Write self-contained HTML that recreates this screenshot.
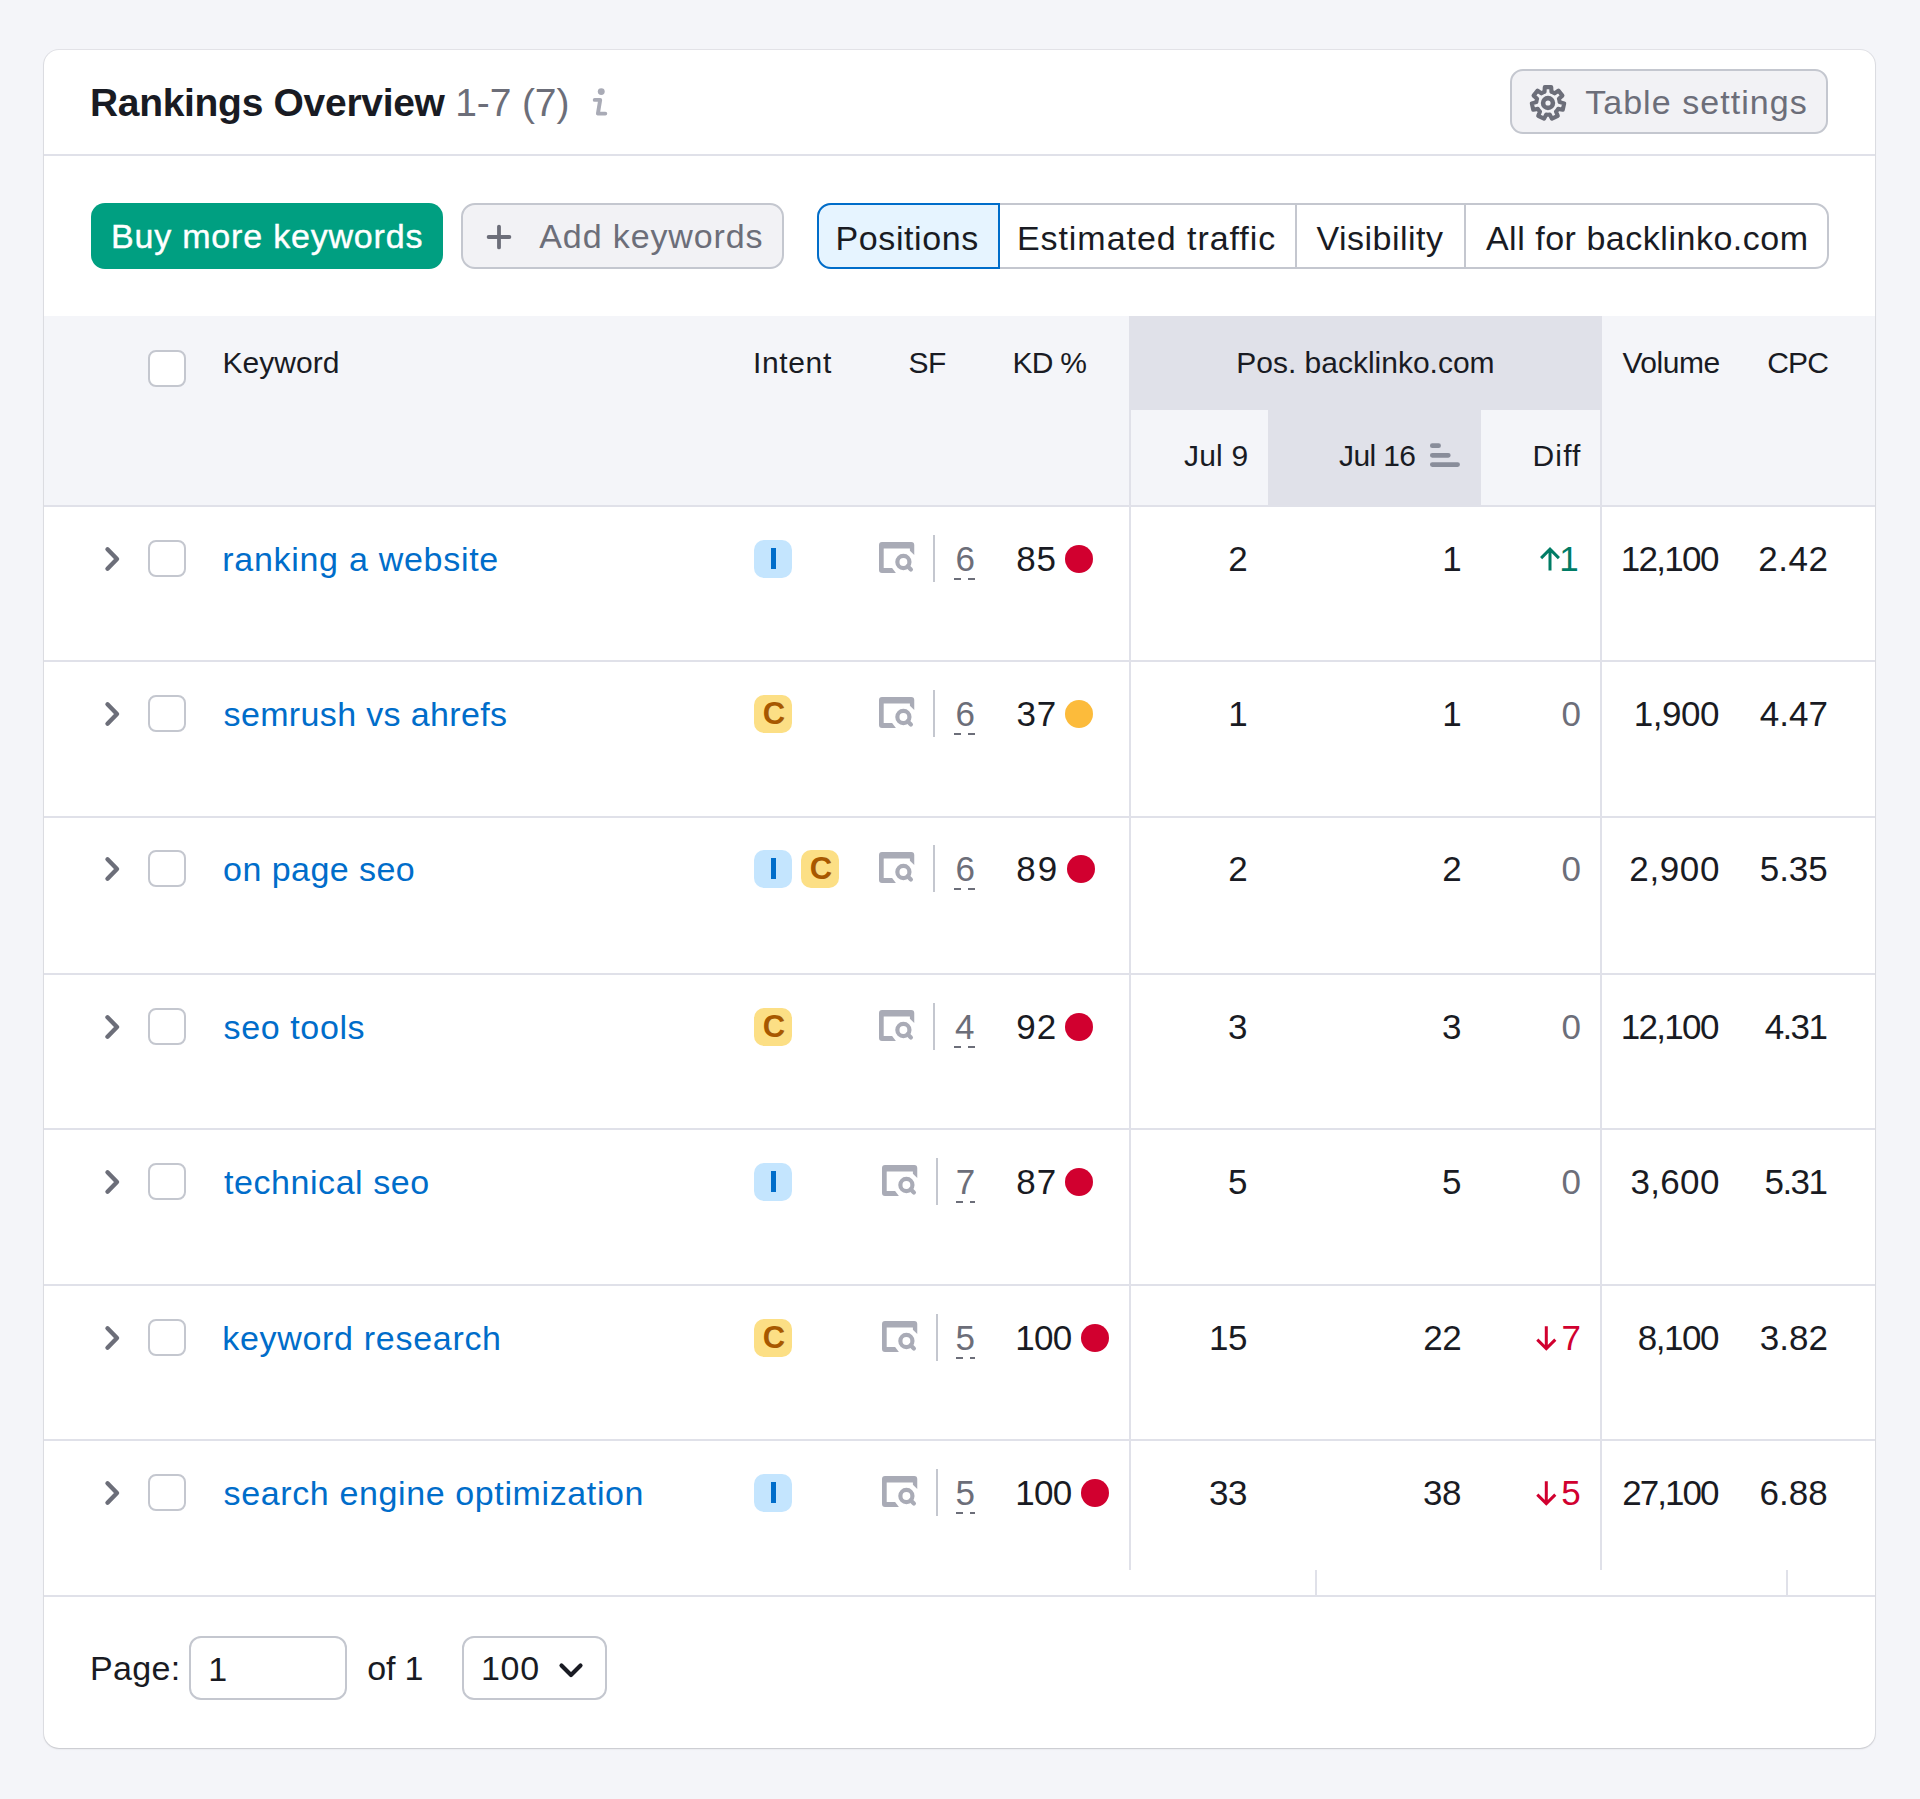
<!DOCTYPE html>
<html><head><meta charset="utf-8"><title>Rankings Overview</title>
<style>
html,body{margin:0;padding:0;}
body{width:1920px;height:1799px;background:#f4f5f9;position:relative;overflow:hidden;font-family:"Liberation Sans",sans-serif;color:#191b23;}
.t{position:absolute;white-space:nowrap;}
.b{position:absolute;}
</style></head><body>
<div class="b" style="left:44px;top:50px;width:1831px;height:1697.5px;background:#fff;border-radius:15px;box-shadow:0 0 0 1px rgba(25,27,35,0.08),0 1px 2px rgba(25,27,35,0.14);"></div>
<div class="t" style="left:89.90px;top:83px;font-size:39px;line-height:39px;font-weight:bold;letter-spacing:-0.30px;">Rankings Overview</div>
<div class="t" style="left:455.25px;top:83px;font-size:39px;line-height:39px;letter-spacing:-0.12px;color:#6c6e79;">1-7 (7)</div>
<svg class="b" style="left:590px;top:86px" width="20" height="32" viewBox="0 0 20 32"><circle cx="11.25" cy="5.6" r="3.45" fill="#a9abb6"/><path d="M4.7 13.9 H10.2 L7.9 27.6 H15.3" fill="none" stroke="#a9abb6" stroke-width="3.9" stroke-linecap="round" stroke-linejoin="round"/></svg>
<div class="b" style="left:1510px;top:69px;width:318px;height:65px;box-sizing:border-box;border:2px solid #c4c7cf;border-radius:13px;background:#f2f2f5;"></div>
<svg class="b" style="left:1527.5px;top:82.5px" width="40" height="40" viewBox="0 0 40 40"><path d="M14.92 9.46 L16.54 8.82 L16.78 4.12 L23.22 4.12 L23.46 8.82 L25.08 9.46 L26.58 10.33 L30.41 7.58 L34.42 12.62 L30.89 15.73 L31.41 17.40 L31.67 19.12 L36.20 20.40 L34.76 26.67 L30.13 25.86 L29.15 27.29 L27.96 28.57 L29.79 32.91 L23.99 35.70 L21.73 31.57 L20.00 31.70 L18.27 31.57 L16.01 35.70 L10.21 32.91 L12.04 28.57 L10.85 27.29 L9.87 25.86 L5.24 26.67 L3.80 20.40 L8.33 19.12 L8.59 17.40 L9.11 15.73 L5.58 12.62 L9.59 7.58 L13.42 10.33 Z" fill="none" stroke="#6c6e79" stroke-width="4.1" stroke-linejoin="round"/><circle cx="20" cy="20" r="4.9" fill="none" stroke="#6c6e79" stroke-width="4.6"/></svg>
<div class="t" style="left:1585.15px;top:85px;font-size:34px;line-height:34px;letter-spacing:1.05px;color:#6c6e79;">Table settings</div>
<div class="b" style="left:44px;top:154px;width:1831px;height:2px;background:#e0e1e9;"></div>
<div class="b" style="left:91px;top:203px;width:352px;height:66px;background:#009f81;border-radius:14px;"></div>
<div class="t" style="left:110.95px;top:219px;font-size:34px;line-height:34px;letter-spacing:0.81px;color:#fff;-webkit-text-stroke:0.4px #fff;">Buy more keywords</div>
<div class="b" style="left:461px;top:203px;width:323px;height:66px;box-sizing:border-box;border:2px solid #c4c7cf;border-radius:14px;background:#f2f2f5;"></div>
<svg class="b" style="left:485px;top:223px" width="28" height="28" viewBox="0 0 28 28"><path d="M14 3.6 V24.4 M3.6 14 H24.4" stroke="#6c6e79" stroke-width="3.8" stroke-linecap="round"/></svg>
<div class="t" style="left:539.30px;top:219px;font-size:34px;line-height:34px;letter-spacing:0.88px;color:#6c6e79;">Add keywords</div>
<div class="b" style="left:817px;top:203px;width:1012px;height:66px;box-sizing:border-box;border:2px solid #c4c7cf;border-radius:14px;background:#fff;"></div>
<div class="b" style="left:817px;top:203px;width:183px;height:66px;box-sizing:border-box;border:2px solid #006dca;border-radius:14px 0 0 14px;background:#e6f4ff;"></div>
<div class="b" style="left:1295px;top:205px;width:2px;height:62px;background:#c4c7cf;"></div>
<div class="b" style="left:1464px;top:205px;width:2px;height:62px;background:#c4c7cf;"></div>
<div class="t" style="left:835.60px;top:221px;font-size:34px;line-height:34px;letter-spacing:0.58px;">Positions</div>
<div class="t" style="left:1016.90px;top:221px;font-size:34px;line-height:34px;letter-spacing:0.95px;">Estimated traffic</div>
<div class="t" style="left:1316.45px;top:221px;font-size:34px;line-height:34px;letter-spacing:0.49px;">Visibility</div>
<div class="t" style="left:1485.90px;top:221px;font-size:34px;line-height:34px;letter-spacing:0.52px;">All for backlinko.com</div>
<div class="b" style="left:44px;top:316px;width:1831px;height:189px;background:#f4f5f9;"></div>
<div class="b" style="left:1129px;top:316px;width:471px;height:94px;background:#e0e1e9;"></div>
<div class="b" style="left:1267.5px;top:410px;width:213.5px;height:95px;background:#e0e1e9;"></div>
<div class="b" style="left:1129px;top:316px;width:2px;height:1254px;background:#e0e1e9;"></div>
<div class="b" style="left:1600px;top:316px;width:2px;height:1254px;background:#e0e1e9;"></div>
<div class="b" style="left:44px;top:505px;width:1831px;height:2px;background:#e0e1e9;"></div>
<div class="b" style="left:148px;top:349.5px;width:37.5px;height:37.0px;box-sizing:border-box;border:2px solid #c4c7cf;border-radius:8px;background:#fff;"></div>
<div class="t" style="left:222.55px;top:348px;font-size:30px;line-height:30px;letter-spacing:0.03px;">Keyword</div>
<div class="t" style="left:752.95px;top:348px;font-size:30px;line-height:30px;letter-spacing:0.65px;">Intent</div>
<div class="t" style="left:908.52px;top:348px;font-size:30px;line-height:30px;letter-spacing:-0.60px;">SF</div>
<div class="t" style="left:1012.58px;top:348px;font-size:30px;line-height:30px;letter-spacing:-0.80px;">KD %</div>
<div class="t" style="left:1236.30px;top:348px;font-size:30px;line-height:30px;letter-spacing:-0.01px;">Pos. backlinko.com</div>
<div class="t" style="left:1622.45px;top:348px;font-size:30px;line-height:30px;letter-spacing:-0.46px;">Volume</div>
<div class="t" style="left:1767.15px;top:348px;font-size:30px;line-height:30px;letter-spacing:-0.80px;">CPC</div>
<div class="t" style="left:1184.05px;top:441px;font-size:30px;line-height:30px;letter-spacing:0.19px;">Jul 9</div>
<div class="t" style="left:1339.05px;top:441px;font-size:30px;line-height:30px;letter-spacing:-0.65px;">Jul 16</div>
<div class="t" style="left:1532.55px;top:441px;font-size:30px;line-height:30px;letter-spacing:1.15px;">Diff</div>
<svg class="b" style="left:1426px;top:440px" width="36" height="30" viewBox="0 -0.0 36 30"><path d="M6.3 5.7 H12.6 M6.3 15.3 H22.3 M6.3 24.6 H31.6" stroke="#898d9a" stroke-width="4.7" stroke-linecap="round"/></svg>
<div class="b" style="left:44px;top:660px;width:1831px;height:2px;background:#e0e1e9;"></div>
<svg class="b" style="left:100px;top:543.8px" width="24" height="30" viewBox="0 0 24 30"><path d="M7.5 4 L17 13.7 L7.5 23.4" transform="translate(0,1.3)" fill="none" stroke="#6c6e79" stroke-width="4.4" stroke-linecap="round" stroke-linejoin="round"/></svg>
<div class="b" style="left:148px;top:540px;width:37.5px;height:37px;box-sizing:border-box;border:2px solid #c4c7cf;border-radius:8px;background:#fff;"></div>
<div class="t" style="left:222.25px;top:542px;font-size:34px;line-height:34px;letter-spacing:0.71px;color:#006dca;">ranking a website</div>
<div class="b" style="left:754px;top:540px;width:37.5px;height:37.5px;background:#c4e5fe;border-radius:10px;"></div>
<div class="b" style="left:771px;top:548px;width:4.7999999999999545px;height:21px;background:#006dca;"></div>
<svg class="b" style="left:879px;top:542.4499999999999px" width="36" height="32" viewBox="0 0 36 32"><path d="M0 3 Q0 0 3 0 H32.25 Q35.25 0 35.25 3 V13.1 L30.9 8.75 V6.5 H4.7 V25.9 H13.1 L16.9 30.9 H3 Q0 30.9 0 27.9 Z" fill="#a9abb6"/>
<circle cx="24.4" cy="20" r="6.05" fill="none" stroke="#a9abb6" stroke-width="4.2"/><path d="M28.6 24.2 L31.9 27.5" stroke="#a9abb6" stroke-width="4.2" stroke-linecap="round"/></svg>
<div class="b" style="left:933px;top:535px;width:2px;height:46.5px;background:#c4c7cf;"></div>
<div class="t" style="left:955.45px;top:541px;font-size:35px;line-height:35px;color:#6c6e79;">6</div>
<div class="b" style="left:954.0px;top:578px;width:21.3px;height:2px;background:repeating-linear-gradient(90deg,#6c6e79 0 7px,transparent 7px 14px);"></div>
<div class="t" style="left:1016.30px;top:541px;font-size:35px;line-height:35px;letter-spacing:0.65px;">85</div>
<div class="b" style="left:1065px;top:545px;width:28.40000000000009px;height:28.399999999999977px;background:#d1002f;border-radius:50%;"></div>
<div class="t" style="left:1228.30px;top:541px;font-size:35px;line-height:35px;letter-spacing:-0.50px;">2</div>
<div class="t" style="left:1442.25px;top:541px;font-size:35px;line-height:35px;letter-spacing:-0.50px;">1</div>
<div class="t" style="left:1559.25px;top:541px;font-size:35px;line-height:35px;color:#007c65;">1</div>
<svg class="b" style="left:1536px;top:542.8px" width="28" height="30" viewBox="0 0 28 30"><path d="M14 27.6 V6.5 M5.1 15.1 L14 6.2 L22.9 15.1" fill="none" stroke="#007c65" stroke-width="3" stroke-linecap="butt" stroke-linejoin="miter"/></svg>
<div class="t" style="left:1620.85px;top:541px;font-size:35px;line-height:35px;letter-spacing:-1.71px;">12,100</div>
<div class="t" style="left:1758.35px;top:541px;font-size:35px;line-height:35px;letter-spacing:0.50px;">2.42</div>
<div class="b" style="left:44px;top:816px;width:1831px;height:2px;background:#e0e1e9;"></div>
<svg class="b" style="left:100px;top:698.8px" width="24" height="30" viewBox="0 0 24 30"><path d="M7.5 4 L17 13.7 L7.5 23.4" transform="translate(0,1.3)" fill="none" stroke="#6c6e79" stroke-width="4.4" stroke-linecap="round" stroke-linejoin="round"/></svg>
<div class="b" style="left:148px;top:695px;width:37.5px;height:37px;box-sizing:border-box;border:2px solid #c4c7cf;border-radius:8px;background:#fff;"></div>
<div class="t" style="left:223.55px;top:697px;font-size:34px;line-height:34px;letter-spacing:0.36px;color:#006dca;">semrush vs ahrefs</div>
<div class="b" style="left:754px;top:695px;width:37.5px;height:37.5px;background:#fcdf85;border-radius:10px;"></div>
<div class="t" style="left:762.75px;top:698px;font-size:31px;line-height:31px;font-weight:bold;color:#a75800;">C</div>
<svg class="b" style="left:879px;top:697.4499999999999px" width="36" height="32" viewBox="0 0 36 32"><path d="M0 3 Q0 0 3 0 H32.25 Q35.25 0 35.25 3 V13.1 L30.9 8.75 V6.5 H4.7 V25.9 H13.1 L16.9 30.9 H3 Q0 30.9 0 27.9 Z" fill="#a9abb6"/>
<circle cx="24.4" cy="20" r="6.05" fill="none" stroke="#a9abb6" stroke-width="4.2"/><path d="M28.6 24.2 L31.9 27.5" stroke="#a9abb6" stroke-width="4.2" stroke-linecap="round"/></svg>
<div class="b" style="left:933px;top:690px;width:2px;height:46.5px;background:#c4c7cf;"></div>
<div class="t" style="left:955.45px;top:696px;font-size:35px;line-height:35px;color:#6c6e79;">6</div>
<div class="b" style="left:954.0px;top:733px;width:21.3px;height:2px;background:repeating-linear-gradient(90deg,#6c6e79 0 7px,transparent 7px 14px);"></div>
<div class="t" style="left:1016.45px;top:696px;font-size:35px;line-height:35px;letter-spacing:0.80px;">37</div>
<div class="b" style="left:1065px;top:700px;width:28.40000000000009px;height:28.399999999999977px;background:#fcbb3b;border-radius:50%;"></div>
<div class="t" style="left:1228.25px;top:696px;font-size:35px;line-height:35px;letter-spacing:-0.50px;">1</div>
<div class="t" style="left:1442.25px;top:696px;font-size:35px;line-height:35px;letter-spacing:-0.50px;">1</div>
<div class="t" style="left:1561.50px;top:696px;font-size:35px;line-height:35px;color:#6c6e79;">0</div>
<div class="t" style="left:1633.85px;top:696px;font-size:35px;line-height:35px;letter-spacing:-0.51px;">1,900</div>
<div class="t" style="left:1759.75px;top:696px;font-size:35px;line-height:35px;letter-spacing:0.03px;">4.47</div>
<div class="b" style="left:44px;top:973px;width:1831px;height:2px;background:#e0e1e9;"></div>
<svg class="b" style="left:100px;top:853.8px" width="24" height="30" viewBox="0 0 24 30"><path d="M7.5 4 L17 13.7 L7.5 23.4" transform="translate(0,1.3)" fill="none" stroke="#6c6e79" stroke-width="4.4" stroke-linecap="round" stroke-linejoin="round"/></svg>
<div class="b" style="left:148px;top:850px;width:37.5px;height:37px;box-sizing:border-box;border:2px solid #c4c7cf;border-radius:8px;background:#fff;"></div>
<div class="t" style="left:223.05px;top:852px;font-size:34px;line-height:34px;letter-spacing:0.45px;color:#006dca;">on page seo</div>
<div class="b" style="left:754px;top:850px;width:37.5px;height:37.5px;background:#c4e5fe;border-radius:10px;"></div>
<div class="b" style="left:771px;top:858px;width:4.7999999999999545px;height:21px;background:#006dca;"></div>
<div class="b" style="left:801px;top:850px;width:37.5px;height:37.5px;background:#fcdf85;border-radius:10px;"></div>
<div class="t" style="left:809.75px;top:853px;font-size:31px;line-height:31px;font-weight:bold;color:#a75800;">C</div>
<svg class="b" style="left:879px;top:852.4499999999999px" width="36" height="32" viewBox="0 0 36 32"><path d="M0 3 Q0 0 3 0 H32.25 Q35.25 0 35.25 3 V13.1 L30.9 8.75 V6.5 H4.7 V25.9 H13.1 L16.9 30.9 H3 Q0 30.9 0 27.9 Z" fill="#a9abb6"/>
<circle cx="24.4" cy="20" r="6.05" fill="none" stroke="#a9abb6" stroke-width="4.2"/><path d="M28.6 24.2 L31.9 27.5" stroke="#a9abb6" stroke-width="4.2" stroke-linecap="round"/></svg>
<div class="b" style="left:933px;top:845px;width:2px;height:46.5px;background:#c4c7cf;"></div>
<div class="t" style="left:955.45px;top:851px;font-size:35px;line-height:35px;color:#6c6e79;">6</div>
<div class="b" style="left:954.0px;top:888px;width:21.3px;height:2px;background:repeating-linear-gradient(90deg,#6c6e79 0 7px,transparent 7px 14px);"></div>
<div class="t" style="left:1016.30px;top:851px;font-size:35px;line-height:35px;letter-spacing:2.00px;">89</div>
<div class="b" style="left:1067px;top:855px;width:28.40000000000009px;height:28.399999999999977px;background:#d1002f;border-radius:50%;"></div>
<div class="t" style="left:1228.30px;top:851px;font-size:35px;line-height:35px;letter-spacing:-0.50px;">2</div>
<div class="t" style="left:1442.30px;top:851px;font-size:35px;line-height:35px;letter-spacing:-0.50px;">2</div>
<div class="t" style="left:1561.50px;top:851px;font-size:35px;line-height:35px;color:#6c6e79;">0</div>
<div class="t" style="left:1629.35px;top:851px;font-size:35px;line-height:35px;letter-spacing:0.61px;">2,900</div>
<div class="t" style="left:1759.80px;top:851px;font-size:35px;line-height:35px;letter-spacing:-0.08px;">5.35</div>
<div class="b" style="left:44px;top:1128px;width:1831px;height:2px;background:#e0e1e9;"></div>
<svg class="b" style="left:100px;top:1011.8px" width="24" height="30" viewBox="0 0 24 30"><path d="M7.5 4 L17 13.7 L7.5 23.4" transform="translate(0,1.3)" fill="none" stroke="#6c6e79" stroke-width="4.4" stroke-linecap="round" stroke-linejoin="round"/></svg>
<div class="b" style="left:148px;top:1008px;width:37.5px;height:37px;box-sizing:border-box;border:2px solid #c4c7cf;border-radius:8px;background:#fff;"></div>
<div class="t" style="left:223.55px;top:1010px;font-size:34px;line-height:34px;letter-spacing:0.62px;color:#006dca;">seo tools</div>
<div class="b" style="left:754px;top:1008px;width:37.5px;height:37.5px;background:#fcdf85;border-radius:10px;"></div>
<div class="t" style="left:762.75px;top:1011px;font-size:31px;line-height:31px;font-weight:bold;color:#a75800;">C</div>
<svg class="b" style="left:879px;top:1010.4499999999999px" width="36" height="32" viewBox="0 0 36 32"><path d="M0 3 Q0 0 3 0 H32.25 Q35.25 0 35.25 3 V13.1 L30.9 8.75 V6.5 H4.7 V25.9 H13.1 L16.9 30.9 H3 Q0 30.9 0 27.9 Z" fill="#a9abb6"/>
<circle cx="24.4" cy="20" r="6.05" fill="none" stroke="#a9abb6" stroke-width="4.2"/><path d="M28.6 24.2 L31.9 27.5" stroke="#a9abb6" stroke-width="4.2" stroke-linecap="round"/></svg>
<div class="b" style="left:933px;top:1003px;width:2px;height:46.5px;background:#c4c7cf;"></div>
<div class="t" style="left:954.95px;top:1009px;font-size:35px;line-height:35px;color:#6c6e79;">4</div>
<div class="b" style="left:954.0px;top:1046px;width:21.3px;height:2px;background:repeating-linear-gradient(90deg,#6c6e79 0 7px,transparent 7px 14px);"></div>
<div class="t" style="left:1016.15px;top:1009px;font-size:35px;line-height:35px;letter-spacing:1.10px;">92</div>
<div class="b" style="left:1065px;top:1013px;width:28.40000000000009px;height:28.40000000000009px;background:#d1002f;border-radius:50%;"></div>
<div class="t" style="left:1228.05px;top:1009px;font-size:35px;line-height:35px;letter-spacing:-0.50px;">3</div>
<div class="t" style="left:1442.05px;top:1009px;font-size:35px;line-height:35px;letter-spacing:-0.50px;">3</div>
<div class="t" style="left:1561.50px;top:1009px;font-size:35px;line-height:35px;color:#6c6e79;">0</div>
<div class="t" style="left:1620.85px;top:1009px;font-size:35px;line-height:35px;letter-spacing:-1.71px;">12,100</div>
<div class="t" style="left:1764.70px;top:1009px;font-size:35px;line-height:35px;letter-spacing:-1.63px;">4.31</div>
<div class="b" style="left:44px;top:1284px;width:1831px;height:2px;background:#e0e1e9;"></div>
<svg class="b" style="left:100px;top:1166.8px" width="24" height="30" viewBox="0 0 24 30"><path d="M7.5 4 L17 13.7 L7.5 23.4" transform="translate(0,1.3)" fill="none" stroke="#6c6e79" stroke-width="4.4" stroke-linecap="round" stroke-linejoin="round"/></svg>
<div class="b" style="left:148px;top:1163px;width:37.5px;height:37px;box-sizing:border-box;border:2px solid #c4c7cf;border-radius:8px;background:#fff;"></div>
<div class="t" style="left:224.00px;top:1165px;font-size:34px;line-height:34px;letter-spacing:0.56px;color:#006dca;">technical seo</div>
<div class="b" style="left:754px;top:1163px;width:37.5px;height:37.5px;background:#c4e5fe;border-radius:10px;"></div>
<div class="b" style="left:771px;top:1171px;width:4.7999999999999545px;height:21px;background:#006dca;"></div>
<svg class="b" style="left:881.5px;top:1165.45px" width="36" height="32" viewBox="0 0 36 32"><path d="M0 3 Q0 0 3 0 H32.25 Q35.25 0 35.25 3 V13.1 L30.9 8.75 V6.5 H4.7 V25.9 H13.1 L16.9 30.9 H3 Q0 30.9 0 27.9 Z" fill="#a9abb6"/>
<circle cx="24.4" cy="20" r="6.05" fill="none" stroke="#a9abb6" stroke-width="4.2"/><path d="M28.6 24.2 L31.9 27.5" stroke="#a9abb6" stroke-width="4.2" stroke-linecap="round"/></svg>
<div class="b" style="left:935.5px;top:1158px;width:2.0px;height:46.5px;background:#c4c7cf;"></div>
<div class="t" style="left:955.70px;top:1164px;font-size:35px;line-height:35px;color:#6c6e79;">7</div>
<div class="b" style="left:956.25px;top:1201px;width:19.05px;height:2px;background:repeating-linear-gradient(90deg,#6c6e79 0 7px,transparent 7px 14px);"></div>
<div class="t" style="left:1016.30px;top:1164px;font-size:35px;line-height:35px;letter-spacing:0.95px;">87</div>
<div class="b" style="left:1065px;top:1168px;width:28.40000000000009px;height:28.40000000000009px;background:#d1002f;border-radius:50%;"></div>
<div class="t" style="left:1228.00px;top:1164px;font-size:35px;line-height:35px;letter-spacing:-0.50px;">5</div>
<div class="t" style="left:1442.00px;top:1164px;font-size:35px;line-height:35px;letter-spacing:-0.50px;">5</div>
<div class="t" style="left:1561.50px;top:1164px;font-size:35px;line-height:35px;color:#6c6e79;">0</div>
<div class="t" style="left:1630.45px;top:1164px;font-size:35px;line-height:35px;letter-spacing:0.34px;">3,600</div>
<div class="t" style="left:1764.60px;top:1164px;font-size:35px;line-height:35px;letter-spacing:-1.60px;">5.31</div>
<div class="b" style="left:44px;top:1439px;width:1831px;height:2px;background:#e0e1e9;"></div>
<svg class="b" style="left:100px;top:1322.8px" width="24" height="30" viewBox="0 0 24 30"><path d="M7.5 4 L17 13.7 L7.5 23.4" transform="translate(0,1.3)" fill="none" stroke="#6c6e79" stroke-width="4.4" stroke-linecap="round" stroke-linejoin="round"/></svg>
<div class="b" style="left:148px;top:1319px;width:37.5px;height:37px;box-sizing:border-box;border:2px solid #c4c7cf;border-radius:8px;background:#fff;"></div>
<div class="t" style="left:222.20px;top:1321px;font-size:34px;line-height:34px;letter-spacing:0.70px;color:#006dca;">keyword research</div>
<div class="b" style="left:754px;top:1319px;width:37.5px;height:37.5px;background:#fcdf85;border-radius:10px;"></div>
<div class="t" style="left:762.75px;top:1322px;font-size:31px;line-height:31px;font-weight:bold;color:#a75800;">C</div>
<svg class="b" style="left:881.5px;top:1321.45px" width="36" height="32" viewBox="0 0 36 32"><path d="M0 3 Q0 0 3 0 H32.25 Q35.25 0 35.25 3 V13.1 L30.9 8.75 V6.5 H4.7 V25.9 H13.1 L16.9 30.9 H3 Q0 30.9 0 27.9 Z" fill="#a9abb6"/>
<circle cx="24.4" cy="20" r="6.05" fill="none" stroke="#a9abb6" stroke-width="4.2"/><path d="M28.6 24.2 L31.9 27.5" stroke="#a9abb6" stroke-width="4.2" stroke-linecap="round"/></svg>
<div class="b" style="left:935.5px;top:1314px;width:2.0px;height:46.5px;background:#c4c7cf;"></div>
<div class="t" style="left:955.40px;top:1320px;font-size:35px;line-height:35px;color:#6c6e79;">5</div>
<div class="b" style="left:956.25px;top:1357px;width:19.05px;height:2px;background:repeating-linear-gradient(90deg,#6c6e79 0 7px,transparent 7px 14px);"></div>
<div class="t" style="left:1015.15px;top:1320px;font-size:35px;line-height:35px;letter-spacing:-0.60px;">100</div>
<div class="b" style="left:1081px;top:1324px;width:28.40000000000009px;height:28.40000000000009px;background:#d1002f;border-radius:50%;"></div>
<div class="t" style="left:1209.05px;top:1320px;font-size:35px;line-height:35px;letter-spacing:-0.50px;">15</div>
<div class="t" style="left:1423.35px;top:1320px;font-size:35px;line-height:35px;letter-spacing:-0.50px;">22</div>
<div class="t" style="left:1561.60px;top:1320px;font-size:35px;line-height:35px;color:#d1002f;">7</div>
<svg class="b" style="left:1532px;top:1321.8px" width="28" height="30" viewBox="0 0 28 30"><path d="M14.3 4.2 V25.5 M5.3 17.6 L14.3 26.6 L23.3 17.6" fill="none" stroke="#d1002f" stroke-width="3" stroke-linecap="butt" stroke-linejoin="miter"/></svg>
<div class="t" style="left:1637.80px;top:1320px;font-size:35px;line-height:35px;letter-spacing:-1.50px;">8,100</div>
<div class="t" style="left:1759.85px;top:1320px;font-size:35px;line-height:35px;">3.82</div>
<svg class="b" style="left:100px;top:1477.8px" width="24" height="30" viewBox="0 0 24 30"><path d="M7.5 4 L17 13.7 L7.5 23.4" transform="translate(0,1.3)" fill="none" stroke="#6c6e79" stroke-width="4.4" stroke-linecap="round" stroke-linejoin="round"/></svg>
<div class="b" style="left:148px;top:1474px;width:37.5px;height:37px;box-sizing:border-box;border:2px solid #c4c7cf;border-radius:8px;background:#fff;"></div>
<div class="t" style="left:223.55px;top:1476px;font-size:34px;line-height:34px;letter-spacing:0.62px;color:#006dca;">search engine optimization</div>
<div class="b" style="left:754px;top:1474px;width:37.5px;height:37.5px;background:#c4e5fe;border-radius:10px;"></div>
<div class="b" style="left:771px;top:1482px;width:4.7999999999999545px;height:21px;background:#006dca;"></div>
<svg class="b" style="left:881.5px;top:1476.45px" width="36" height="32" viewBox="0 0 36 32"><path d="M0 3 Q0 0 3 0 H32.25 Q35.25 0 35.25 3 V13.1 L30.9 8.75 V6.5 H4.7 V25.9 H13.1 L16.9 30.9 H3 Q0 30.9 0 27.9 Z" fill="#a9abb6"/>
<circle cx="24.4" cy="20" r="6.05" fill="none" stroke="#a9abb6" stroke-width="4.2"/><path d="M28.6 24.2 L31.9 27.5" stroke="#a9abb6" stroke-width="4.2" stroke-linecap="round"/></svg>
<div class="b" style="left:935.5px;top:1469px;width:2.0px;height:46.5px;background:#c4c7cf;"></div>
<div class="t" style="left:955.40px;top:1475px;font-size:35px;line-height:35px;color:#6c6e79;">5</div>
<div class="b" style="left:956.25px;top:1512px;width:19.05px;height:2px;background:repeating-linear-gradient(90deg,#6c6e79 0 7px,transparent 7px 14px);"></div>
<div class="t" style="left:1015.15px;top:1475px;font-size:35px;line-height:35px;letter-spacing:-0.60px;">100</div>
<div class="b" style="left:1081px;top:1479px;width:28.40000000000009px;height:28.40000000000009px;background:#d1002f;border-radius:50%;"></div>
<div class="t" style="left:1209.10px;top:1475px;font-size:35px;line-height:35px;letter-spacing:-0.50px;">33</div>
<div class="t" style="left:1423.10px;top:1475px;font-size:35px;line-height:35px;letter-spacing:-0.50px;">38</div>
<div class="t" style="left:1561.30px;top:1475px;font-size:35px;line-height:35px;color:#d1002f;">5</div>
<svg class="b" style="left:1532px;top:1476.8px" width="28" height="30" viewBox="0 0 28 30"><path d="M14.3 4.2 V25.5 M5.3 17.6 L14.3 26.6 L23.3 17.6" fill="none" stroke="#d1002f" stroke-width="3" stroke-linecap="butt" stroke-linejoin="miter"/></svg>
<div class="t" style="left:1622.25px;top:1475px;font-size:35px;line-height:35px;letter-spacing:-1.99px;">27,100</div>
<div class="t" style="left:1759.40px;top:1475px;font-size:35px;line-height:35px;letter-spacing:0.07px;">6.88</div>
<div class="b" style="left:1315px;top:1570px;width:2px;height:26px;background:#e0e1e9;"></div>
<div class="b" style="left:1786px;top:1570px;width:2px;height:26px;background:#e0e1e9;"></div>
<div class="b" style="left:44px;top:1595px;width:1831px;height:2px;background:#e0e1e9;"></div>
<div class="t" style="left:89.90px;top:1651px;font-size:34px;line-height:34px;letter-spacing:0.34px;">Page:</div>
<div class="b" style="left:189px;top:1636px;width:158px;height:64px;box-sizing:border-box;border:2px solid #c4c7cf;border-radius:12px;background:#fff;"></div>
<div class="t" style="left:208.20px;top:1652px;font-size:34px;line-height:34px;">1</div>
<div class="t" style="left:367.35px;top:1651px;font-size:34px;line-height:34px;letter-spacing:-0.23px;">of 1</div>
<div class="b" style="left:461.5px;top:1636px;width:145.0px;height:64px;box-sizing:border-box;border:2px solid #c4c7cf;border-radius:12px;background:#fff;"></div>
<div class="t" style="left:480.90px;top:1651px;font-size:34px;line-height:34px;letter-spacing:0.75px;">100</div>
<svg class="b" style="left:556px;top:1658px" width="30" height="24" viewBox="0 0 30 24"><path d="M5.5 7.6 L15 17 L24.5 7.6" fill="none" stroke="#191b23" stroke-width="4.2" stroke-linecap="round" stroke-linejoin="round"/></svg>
</body></html>
